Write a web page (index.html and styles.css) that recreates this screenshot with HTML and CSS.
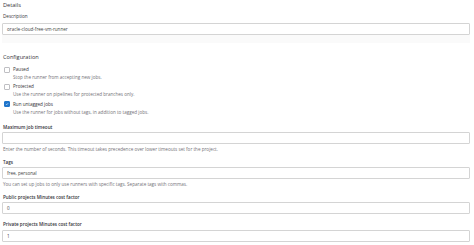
FILE: index.html
```html
<!DOCTYPE html>
<html>
<head>
<meta charset="utf-8">
<link rel="stylesheet" href="styles.css">
</head>
<body>
<div class="page">
  <section class="details">
    <h2 class="heading">Details</h2>
    <div class="field f-desc">
      <label class="label">Description</label>
      <div class="input">oracle-cloud-free-vm-runner</div>
    </div>
    <div class="band"></div>
  </section>
  <section class="config">
    <h2 class="heading">Configuration</h2>
    <div class="check c-paused">
      <div class="check-row"><span class="box"></span><span class="check-label">Paused</span></div>
      <div class="help indent">Stop the runner from accepting new jobs.</div>
    </div>
    <div class="check c-protected">
      <div class="check-row"><span class="box"></span><span class="check-label">Protected</span></div>
      <div class="help indent">Use the runner on pipelines for protected branches only.</div>
    </div>
    <div class="check c-untagged">
      <div class="check-row"><span class="box checked"><svg viewBox="0 0 6 6" width="6" height="6"><path d="M1.4 3.1 L2.5 4.2 L4.6 1.9" fill="none" stroke="#fff" stroke-width="0.9"/></svg></span><span class="check-label">Run untagged jobs</span></div>
      <div class="help indent">Use the runner for jobs without tags, in addition to tagged jobs.</div>
    </div>
    <div class="field f-timeout">
      <label class="label">Maximum job timeout</label>
      <div class="input"></div>
      <div class="help">Enter the number of seconds. This timeout takes precedence over lower timeouts set for the project.</div>
    </div>
    <div class="field f-tags">
      <label class="label">Tags</label>
      <div class="input">free, personal</div>
      <div class="help">You can set up jobs to only use runners with specific tags. Separate tags with commas.</div>
    </div>
    <div class="field f-public">
      <label class="label">Public projects Minutes cost factor</label>
      <div class="input">0</div>
    </div>
    <div class="field f-private">
      <label class="label">Private projects Minutes cost factor</label>
      <div class="input">1</div>
    </div>
  </section>
</div>
</body>
</html>
```
FILE: styles.css
```css
html, body {
  margin: 0;
  padding: 0;
  background: #fff;
}
.page {
  font-family: "Open Sans", "Noto Sans", "DejaVu Sans", sans-serif;
  font-size: 4.6px;
  line-height: 7px;
  color: #333238;
  padding: 0 4px 0 2px;
  width: 468px;
}
.heading {
  font-size: 5.6px;
  font-weight: 400;
  line-height: 8px;
  margin: 1px 0 0 1px;
  color: #333238;
}
.field {
  display: flex;
  flex-direction: column;
}
.label {
  line-height: 7px;
  padding-left: 1px;
  color: #333238;
  font-weight: 600;
  margin-bottom: 1.5px;
}
.input {
  box-sizing: border-box;
  height: 12px;
  border: 1px solid #d4d4d4;
  border-radius: 1px;
  padding: 0 4px;
  line-height: 10px;
  color: #444;
  background: #fff;
}
.f-desc {
  margin-top: 3.5px;
}
.f-desc .label {
  font-weight: 500;
  margin-bottom: 3px;
}
.band {
  height: 8px;
  background: #fafafa;
}
.config .heading {
  margin-top: 10px;
}
.c-paused {
  margin-top: 5px;
}
.c-protected {
  margin-top: 1.5px;
}
.c-untagged {
  margin-top: 2px;
}
.check-row {
  display: flex;
  align-items: center;
  gap: 3px;
  height: 8px;
}
.box {
  box-sizing: border-box;
  width: 6px;
  height: 6px;
  border: 1px solid #bfbfc3;
  border-radius: 1px;
  margin-left: 2px;
  display: flex;
  align-items: center;
  justify-content: center;
  background: #fff;
}
.box.checked {
  background: #1f75cb;
  border-color: #1f75cb;
}
.box svg {
  display: block;
}
.help {
  color: #737278;
  padding-left: 1px;
}
.help.indent {
  padding-left: 11px;
  margin-top: 0.5px;
}
.field .help {
  margin-top: 1.5px;
}
.f-timeout {
  margin-top: 8px;
}
.f-tags {
  margin-top: 6px;
}
.f-public {
  margin-top: 6px;
}
.f-private {
  margin-top: 6.5px;
}
.f-private .label {
  margin-bottom: 2px;
}
```
